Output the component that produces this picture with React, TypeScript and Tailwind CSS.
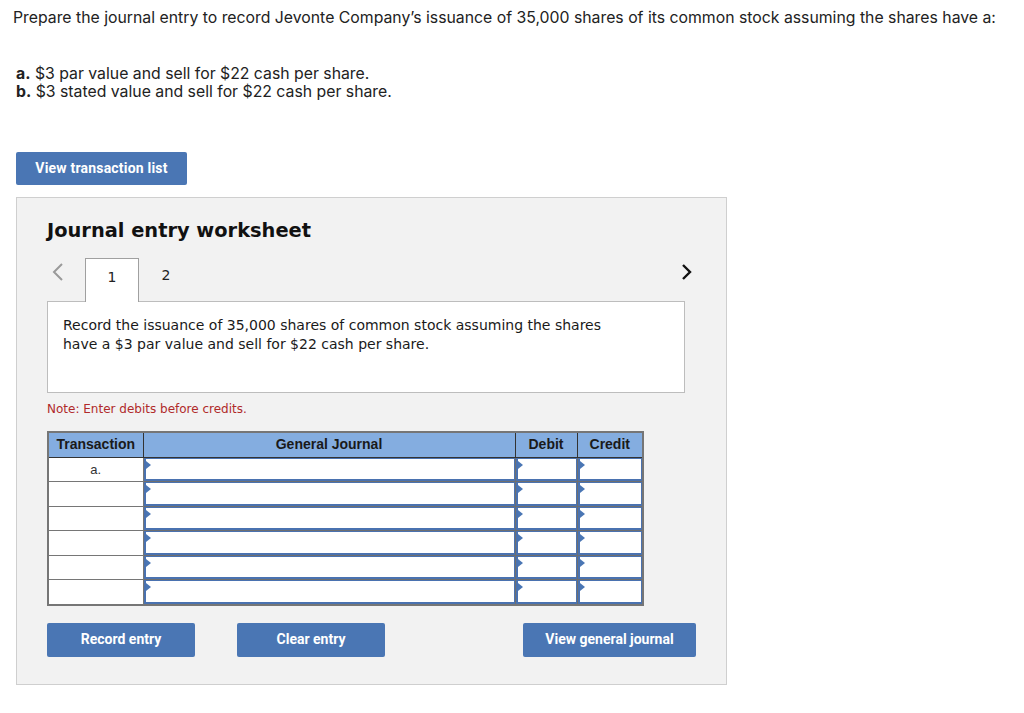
const rows = ["a.", "", "", "", "", ""];

function InputCell({ w }: { w: string }) {
  return (
    <td className={`${w} relative border border-[#6f6f6f] p-0`}>
      <div className="absolute inset-0 bg-white border border-[#4a72b0] border-l-2 border-b-2">
        <span className="absolute left-0 top-[2px] w-0 h-0 border-y-[4px] border-y-transparent border-l-[5px] border-l-[#4a76b4]" />
      </div>
    </td>
  );
}

export default function App() {
  return (
    <div className="min-h-[713px] bg-white text-[#222] font-['Inter','Lato',sans-serif]">
      <div className="pt-[8px] pl-[13px] text-[15.8px] leading-[20px]">
        Prepare the journal entry to record Jevonte Company’s issuance of 35,000 shares of its common stock assuming the shares have a:
      </div>

      <div className="pl-[16px] mt-[37px] text-[15.8px] leading-[18px]">
        <div>
          <span className="font-bold">a.</span> $3 par value and sell for $22 cash per share.
        </div>
        <div>
          <span className="font-bold">b.</span> $3 stated value and sell for $22 cash per share.
        </div>
      </div>

      <div className="pl-[16px] mt-[51px]">
        <button className="w-[171px] h-[33px] rounded-[2px] bg-[#4a76b4] text-white text-[14px] font-bold font-['Roboto',sans-serif] tracking-[0.2px]">
          View transaction list
        </button>
      </div>

      <div className="ml-[16px] mt-[12px] w-[711px] h-[488px] bg-[#f2f2f2] border border-[#cfcfcf] px-[30px]">
        <h2 className="mt-[20px] text-[19.4px] leading-[26px] font-bold text-[#111] font-['DejaVu_Sans',sans-serif]">
          Journal entry worksheet
        </h2>

        <div className="mt-[13px] flex items-end h-[44px]">
          <div className="w-[38px] h-[44px] pl-[5px] pt-[6px]">
            <svg width="12" height="18" viewBox="0 0 12 18">
              <path d="M10 1 L2 9 L10 17" fill="none" stroke="#9a9a9a" strokeWidth="2" />
            </svg>
          </div>
          <div className="w-[54px] h-[44px] bg-white border border-b-0 border-[#a0a0a0] flex justify-center pt-[8px] text-[14px] font-['DejaVu_Sans',sans-serif] relative z-10 -mb-px">
            1
          </div>
          <div className="w-[54px] h-[44px] flex justify-center pt-[8px] text-[14px] font-['DejaVu_Sans',sans-serif]">
            2
          </div>
          <div className="flex-1" />
          <div className="h-[44px] pt-[7px] pr-[3px]">
            <svg width="12" height="16" viewBox="0 0 12 16">
              <path d="M2 1 L9 8 L2 15" fill="none" stroke="#111" strokeWidth="2.4" />
            </svg>
          </div>
        </div>

        <div className="w-[638px] h-[92px] bg-white border border-[#bdbdbd] px-[15px] pt-[14px] text-[14px] leading-[19px] text-[#1a1a1a] font-['DejaVu_Sans',sans-serif]">
          Record the issuance of 35,000 shares of common stock assuming the shares
          <br />
          have a $3 par value and sell for $22 cash per share.
        </div>

        <div className="mt-[9px] text-[12px] leading-[14px] text-[#b02a2a] font-['DejaVu_Sans',sans-serif]">
          Note: Enter debits before credits.
        </div>

        <table className="mt-[15px] border-collapse border-2 border-[#767676] font-['Liberation_Sans',sans-serif] text-[14px]">
          <thead>
            <tr className="h-[25px] bg-[#84ade0] text-[#1a1a1a]">
              <th className="w-[95px] border border-[#333] font-bold">Transaction</th>
              <th className="w-[372px] border border-[#333] font-bold">General Journal</th>
              <th className="w-[62px] border border-[#333] font-bold">Debit</th>
              <th className="w-[66px] border border-[#333] font-bold">Credit</th>
            </tr>
          </thead>
          <tbody>
            {rows.map((r, i) => (
              <tr key={i} className="h-[24.6px]">
                <td className="w-[95px] bg-white border border-[#767676] text-center align-top text-[13px] pt-[2px] text-[#333]">
                  {r}
                </td>
                <InputCell w="w-[372px]" />
                <InputCell w="w-[62px]" />
                <InputCell w="w-[66px]" />
              </tr>
            ))}
          </tbody>
        </table>

        <div className="mt-[17px] flex font-['Roboto',sans-serif] text-[14px] font-bold text-white">
          <button className="shrink-0 w-[148px] h-[34px] rounded-[2px] bg-[#4a76b4]">Record entry</button>
          <button className="shrink-0 ml-[42px] w-[148px] h-[34px] rounded-[2px] bg-[#4a76b4]">Clear entry</button>
          <button className="shrink-0 ml-[138px] w-[173px] h-[34px] rounded-[2px] bg-[#4a76b4]">View general journal</button>
        </div>
      </div>
    </div>
  );
}
